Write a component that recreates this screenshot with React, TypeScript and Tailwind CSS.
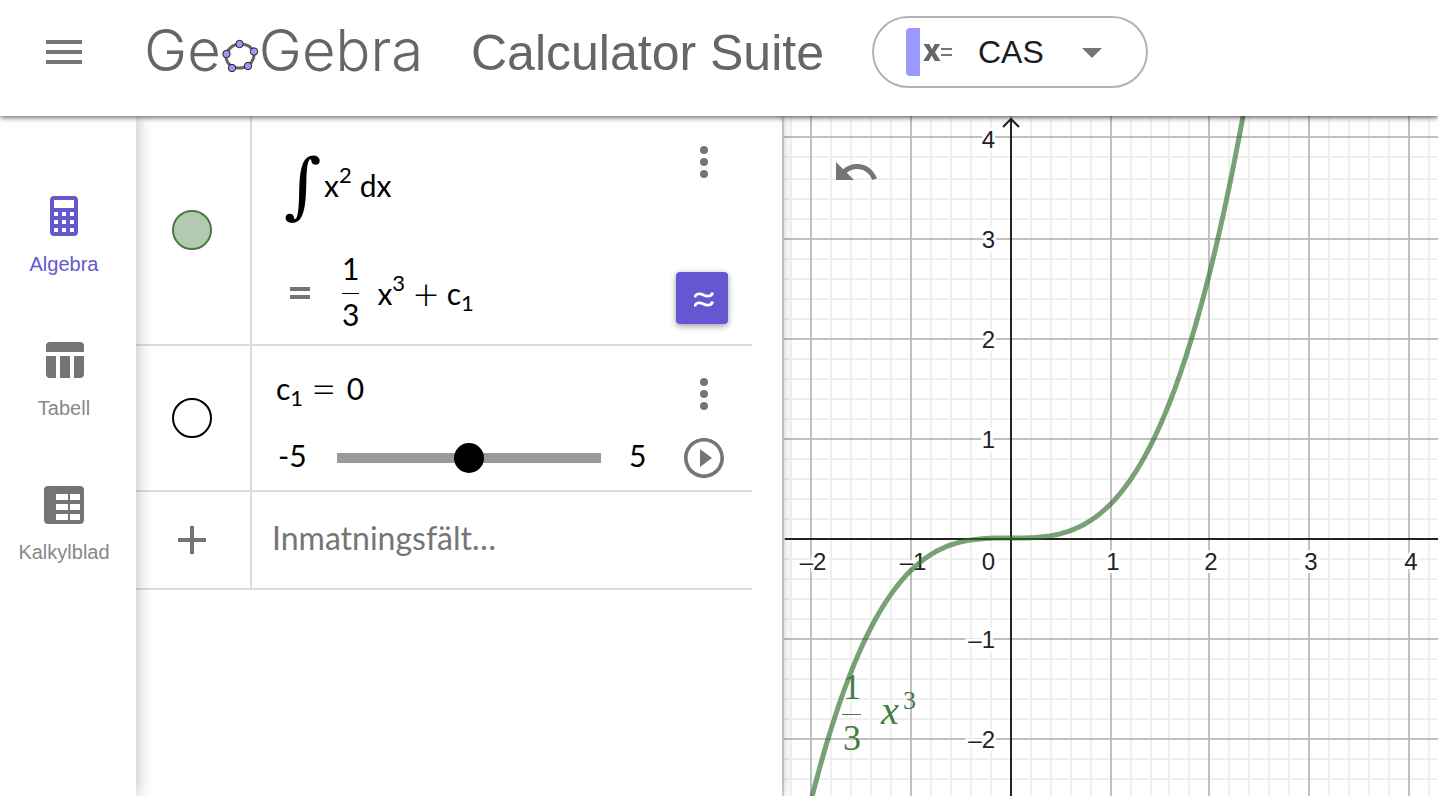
import { ReactNode, useState } from "react";

type Tool = { name: string; active?: boolean; icon: ReactNode }

const tools: Tool[] = [
    {
        name: "Algebra",
        active: true,
        icon: <path fillRule="evenodd" d="M14 4h20a4 4 0 0 1 4 4v32a4 4 0 0 1-4 4H14a4 4 0 0 1-4-4V8a4 4 0 0 1 4-4zM14 8v8h20V8zM14 20v4h4v-4zM22 20v4h4v-4zM30 20v4h4v-4zM14 28v4h4v-4zM22 28v4h4v-4zM30 28v4h4v-4zM14 36v4h4v-4zM22 36v4h4v-4zM30 36v4h4v-4z" />,
    },
    {
        name: "Tabell",
        icon: <path d="M10 6h30a4 4 0 0 1 4 4v6H6v-6a4 4 0 0 1 4-4zM6 20h10v22h-6a4 4 0 0 1-4-4zM20 20h10v22H20zM34 20h10v18a4 4 0 0 1-4 4h-6z" />,
    },
    {
        name: "Kalkylblad",
        icon: <path fillRule="evenodd" d="M8 6h32a4 4 0 0 1 4 4v30a4 4 0 0 1-4 4H8a4 4 0 0 1-4-4V10a4 4 0 0 1 4-4zM16 14v6h12v-6zM30 14v6h10v-6zM16 24v6h12v-6zM30 24v6h10v-6zM16 34v6h12v-6zM30 34v6h10v-6z" />,
    },
]

// Graph geometry in pixels, origin is where the axes cross
const ORIGIN_X = 227
const ORIGIN_Y = 423
const UNIT = 100

const toX = (x: number) => ORIGIN_X + x * UNIT - (x > 1.5 ? 2 : 0)
const toY = (y: number) => ORIGIN_Y - y * UNIT - (y > 3.7 ? 2 : 0)

const range = (from: number, to: number) => Array.from({ length: to - from + 1 }, (_, i) => from + i)

const curve = range(-80, 100)
    .map((i) => i / 20)
    .map((x) => `${ORIGIN_X - 1 + x * UNIT},${ORIGIN_Y - 1 - (x ** 3 / 3) * UNIT}`)
    .join(" ")

function minus(n: number) {
    return n < 0 ? `–${-n}` : `${n}`
}

function Icon({ children, size = 24 }: { children: ReactNode, size?: number }) {
    return <svg viewBox={`0 0 ${size} ${size}`} className="size-12 shrink-0" fill="currentColor" aria-hidden="true">{children}</svg>
}

function Logo() {
    return <a href="#" aria-label="GeoGebra" className="flex items-center text-[#666] font-[Inter,sans-serif] font-light text-[58px] leading-[68px]">
        <span>Ge</span>
        <svg viewBox="0 0 38 68" className="w-[38px] h-[68px]" aria-hidden="true">
            <ellipse cx="19" cy="40" rx="14" ry="12" fill="none" stroke="#666" strokeWidth="3" transform="rotate(-12 19 40)" />
            <g fill="#9999ff" stroke="#222" strokeWidth="1">
                <circle cx="18.5" cy="28" r="3.7" />
                <circle cx="33" cy="35.5" r="3.7" />
                <circle cx="27" cy="50" r="3.7" />
                <circle cx="11" cy="52" r="3.7" />
                <circle cx="5.5" cy="38" r="3.7" />
            </g>
        </svg>
        <span>Gebra</span>
    </a>
}

function Header() {
    return <header className="relative z-20 flex items-start bg-white pl-10 pr-6 pt-4 pb-7 shadow-[0_1px_6px_rgba(0,0,0,0.7)]">
        <button aria-label="Meny" className="mt-3 text-[#757575]">
            <Icon><path d="M3 18h18v-2H3v2zm0-5h18v-2H3v2zm0-7v2h18V6H3z" /></Icon>
        </button>
        <div className="ml-14 w-[327px] shrink-0"><Logo /></div>
        <h1 className="text-[50px] leading-[74px] h-18 text-[#666] whitespace-nowrap">Calculator Suite</h1>
        <button className="ml-auto lg:ml-12 flex items-center h-18 w-[276px] shrink-0 rounded-full border-2 border-[#b3b3b3] pl-8 text-[32px] text-[#1c1c1f]">
            <svg viewBox="0 0 48 48" className="size-12" aria-hidden="true">
                <path d="M4 0h10v48H4a4 4 0 0 1-4-4V4a4 4 0 0 1 4-4z" fill="#9999ff" />
                <path d="M17.500 16h5.800l2.700 5.200 2.800-5.200h5.400l-5.200 8.300 5.500 8.700h-5.800l-3-5.600-3 5.600h-5.500l5.700-8.800z" fill="#666" />
                <path d="M35 20h11v2H35zM35 26h11v2H35z" fill="#757575" />
            </svg>
            <span className="ml-6">CAS</span>
            <span className="ml-6 text-[#757575]"><Icon><path d="M7 10l5 5 5-5z" /></Icon></span>
        </button>
    </header>
}

function Sidebar() {
    return <nav className="relative z-10 w-34 shrink-0 bg-white pt-19 shadow-[0_0_16px_rgba(0,0,0,0.3)]">
        {tools.map((tool) => (
            <button
                key={tool.name}
                className={`flex w-full h-36 pr-2 flex-col items-center gap-3 text-xl leading-6 ${tool.active ? "text-[#6557d2]" : "text-[#757575]"}`}
            >
                <Icon size={48}>{tool.icon}</Icon>
                <span className={tool.active ? "" : "text-[#888]"}>{tool.name}</span>
            </button>
        ))}
    </nav>
}

function Row({ marker, children }: { marker: ReactNode, children: ReactNode }) {
    return <div className="flex border-b-2 border-[#dcdcdc]">
        <div className="flex w-29 pr-0.5 shrink-0 items-center justify-center border-r-2 border-[#dcdcdc]">{marker}</div>
        {children}
    </div>
}

function MoreButton() {
    return <button aria-label="Mer" className="text-[#757575]">
        <Icon>
            <circle cx="12" cy="6" r="2" />
            <circle cx="12" cy="12" r="2" />
            <circle cx="12" cy="18" r="2" />
        </Icon>
    </button>
}

function Fraction({ top, bottom }: { top: string, bottom: string }) {
    return <span className="inline-flex flex-col items-center">
        <span className="h-[51px] leading-[52px]">{top}</span>
        <span className="h-px w-full bg-current" />
        <span className="h-[50px] leading-10">{bottom}</span>
    </span>
}

function AlgebraPanel() {
    const [value, setValue] = useState(0)

    return <main className="w-[646px] shrink-0 rounded-tr-lg bg-white pr-[30px] font-[Lato,sans-serif] text-[30px] text-black shadow-[0_0_12px_rgba(0,0,0,0.3)] z-[5]">
        <Row marker={<button aria-label="Visa eller dölj integralen" className="size-10 rounded-full border-2 border-[#4a7a41] bg-[#b2cbb0]" />}>
            <div className="flex flex-1 justify-between pl-8 pr-6 h-[228px]">
                <div className="pt-7">
                    <div className="flex h-[82px] items-center leading-[82px]">
                        <span className="w-10 font-['DejaVu_Serif',serif] italic text-[72px]">∫</span>
                        <span>x<sup className="static align-[14px] text-[22px] leading-none">2</sup></span>
                        <span className="ml-2">dx</span>
                    </div>
                    <div className="mt-4 flex h-[102px] items-center">
                        <svg viewBox="0 0 32 20" className="w-8 h-5" fill="#757575" aria-hidden="true">
                            <path d="M6 4h20v4H6zM6 12h20v4H6z" />
                        </svg>
                        <span className="ml-[26px]"><Fraction top="1" bottom="3" /></span>
                        <span className="ml-4.5">x<sup className="static align-[14px] text-[22px] leading-none">3</sup></span>
                        <span className="ml-2 text-[44px] font-light leading-10">+</span>
                        <span className="ml-2">c<sub className="static align-[-6px] text-[22px] leading-none">1</sub></span>
                    </div>
                </div>
                <div className="flex flex-col items-end justify-between pt-[22px] pb-5">
                    <MoreButton />
                    <button aria-label="Numeriskt värde" className="flex size-13 items-center justify-center rounded bg-[#6557d2] pl-1 pt-1 text-white shadow-[0_2px_6px_rgba(0,0,0,0.4)]">
                        <svg viewBox="0 0 20 18" className="w-5 h-[18px]" fill="none" stroke="currentColor" strokeWidth="2.800" aria-hidden="true">
                            <path d="M1 6.500c0-4 4.500-4.500 8.500-2.500s8.500 1.500 9-2.500M1 15.500c0-4 4.500-4.500 8.500-2.500s8.500 1.500 9-2.500" />
                        </svg>
                    </button>
                </div>
            </div>
        </Row>
        <Row marker={<button aria-label="Visa eller dölj c1" className="size-10 rounded-full border-2 border-black" />}>
            <div className="flex h-36 flex-1 flex-col justify-between pl-6 pr-6 pt-6 pb-2">
                <div className="flex items-center justify-between">
                    <div className="flex leading-10 -mt-3 items-center">
                        <span>c<sub className="static align-[-6px] text-[22px] leading-none">1</sub></span>
                        <span className="ml-2 text-[44px] font-light">=</span>
                        <span className="ml-2.5">{value}</span>
                    </div>
                    <MoreButton />
                </div>
                <div className="flex items-center">
                    <label htmlFor="c1" className="w-[61px] shrink-0 pl-0.5 pb-1">-5</label>
                    <input
                        id="c1"
                        type="range"
                        min={-5}
                        max={5}
                        value={value}
                        onChange={(e) => setValue(Number(e.target.value))}
                        className="h-[30px] min-w-0 flex-1 appearance-none bg-transparent [&::-webkit-slider-runnable-track]:h-2.5 [&::-webkit-slider-runnable-track]:bg-[#999] [&::-webkit-slider-thumb]:-mt-2.5 [&::-webkit-slider-thumb]:size-[30px] [&::-webkit-slider-thumb]:appearance-none [&::-webkit-slider-thumb]:rounded-full [&::-webkit-slider-thumb]:bg-black"
                    />
                    <span className="w-[79px] shrink-0 pl-7 pb-1">5</span>
                    <button aria-label="Spela" className="text-[#757575]">
                        <Icon><path d="M10 16.500l6-4.500-6-4.500v9zM12 2C6.480 2 2 6.480 2 12s4.480 10 10 10 10-4.480 10-10S17.520 2 12 2zm0 18.200c-4.500 0-8.200-3.700-8.200-8.200s3.700-8.200 8.200-8.200 8.200 3.700 8.200 8.200-3.700 8.200-8.200 8.200z" /></Icon>
                    </button>
                </div>
            </div>
        </Row>
        <Row marker={<span className="text-[#757575]"><Icon><path d="M19 13h-6v6h-2v-6H5v-2h6V5h2v6h6v2z" /></Icon></span>}>
            <input
                aria-label="Inmatningsfält"
                placeholder="Inmatningsfält…"
                className="h-24 min-w-0 flex-1 pl-5 pb-1.5 text-[32px] outline-none placeholder:text-[#757575]"
            />
        </Row>
    </main>
}

function Graph() {
    return <section className="relative min-w-0 flex-1 overflow-hidden border-l-2 border-[#dcdcdc] bg-white">
        <svg className="absolute inset-0 size-full" role="img" aria-label="Graf">
            <g stroke="#f0f0f0" strokeWidth="2">
                {range(-11, 60).map((i) => <line key={i} x1={toX(i / 5)} x2={toX(i / 5)} y1="0" y2="100%" />)}
                {range(-60, 21).map((i) => <line key={i} y1={toY(i / 5)} y2={toY(i / 5)} x1="0" x2="100%" />)}
            </g>
            <g stroke="#c0c0c0" strokeWidth="2">
                {range(-2, 12).map((i) => <line key={i} x1={toX(i)} x2={toX(i)} y1="0" y2="100%" />)}
                {range(-12, 4).map((i) => <line key={i} y1={toY(i)} y2={toY(i)} x1="0" x2="100%" />)}
            </g>
            <g stroke="#222" strokeWidth="2" fill="none">
                <line x1="1" x2="100%" y1={ORIGIN_Y} y2={ORIGIN_Y} />
                <line x1={ORIGIN_X} x2={ORIGIN_X} y1="3" y2="100%" />
                <path d={`M${ORIGIN_X - 8} 11l8-8 8 8`} />
            </g>
            <g fontSize="24" fill="#222" stroke="#fff" strokeWidth="6" paintOrder="stroke">
                {[-2, -1, 1, 2, 3, 4].map((n) => (
                    <text key={n} x={toX(n) + 2} y={ORIGIN_Y + 31} textAnchor="middle">{minus(n)}</text>
                ))}
                <text x={ORIGIN_X - 16} y={ORIGIN_Y + 31} textAnchor="end">0</text>
                {[-2, -1, 1, 2, 3, 4].map((n) => (
                    <text key={n} x={ORIGIN_X - 16} y={ORIGIN_Y - n * UNIT + 9} textAnchor="end">{minus(n)}</text>
                ))}
            </g>
            <polyline points={curve} fill="none" stroke="#2f6f2b" strokeOpacity="0.65" strokeWidth="5" strokeLinejoin="round" />
            <g fill="#447d40" className="font-['Liberation_Serif',serif]" fontSize="36">
                <text x="68" y="583" textAnchor="middle">1</text>
                <path d="M58 598h19v1H58z" />
                <text x="68" y="634" textAnchor="middle">3</text>
                <text x="97" y="608" fontStyle="italic" fontSize="40">x</text>
                <text x="119" y="593" fontSize="26">3</text>
            </g>
        </svg>
        <button aria-label="Ångra" className="absolute left-12 top-8 text-[#757575]">
            <Icon><path d="M12.500 8c-2.650 0-5.050.990-6.900 2.600L2 7v9h9l-3.620-3.620c1.390-1.160 3.160-1.880 5.120-1.880 3.540 0 6.550 2.310 7.600 5.500l2.370-.780C21.080 11.030 17.150 8 12.500 8z" /></Icon>
        </button>
    </section>
}

export default function App() {
    return <div className="flex min-h-screen flex-col overflow-hidden bg-white font-['Liberation_Sans',sans-serif]">
        <Header />
        <div className="flex flex-1">
            <Sidebar />
            <AlgebraPanel />
            <Graph />
        </div>
    </div>
}
